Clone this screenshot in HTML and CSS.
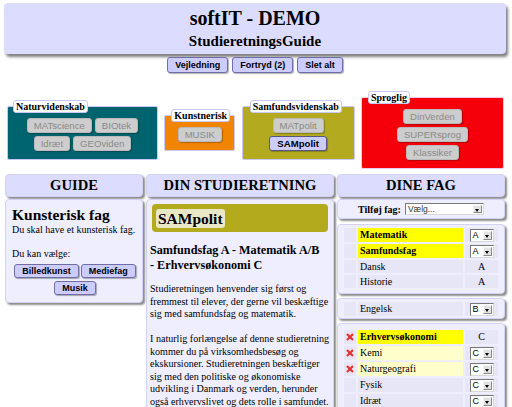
FILE: index.html
```html
<!DOCTYPE html>
<html lang="da">
<head>
<meta charset="utf-8">
<title>softIT - DEMO</title>
<link rel="stylesheet" href="styles.css">
</head>
<body>
<div class="page">
  <header class="top">
    <h1>softIT - DEMO</h1>
    <div class="sub">StudieretningsGuide</div>
  </header>
  <nav class="actions">
    <span class="btn">Vejledning</span>
    <span class="btn">Fortryd (2)</span>
    <span class="btn">Slet alt</span>
  </nav>

  <section class="cats">
    <div class="cat cat-nat">
      <div class="cat-label">Naturvidenskab</div>
      <div class="brow"><span class="cbtn">MATscience</span><span class="cbtn">BIOtek</span></div>
      <div class="brow"><span class="cbtn">Idræt</span><span class="cbtn">GEOviden</span></div>
    </div>
    <div class="cat cat-kun">
      <div class="cat-label">Kunstnerisk</div>
      <div class="brow"><span class="cbtn">MUSIK</span></div>
    </div>
    <div class="cat cat-sam">
      <div class="cat-label">Samfundsvidenskab</div>
      <div class="brow"><span class="cbtn">MATpolit</span></div>
      <div class="brow"><span class="cbtn on">SAMpolit</span></div>
    </div>
    <div class="cat cat-spr">
      <div class="cat-label">Sproglig</div>
      <div class="brow"><span class="cbtn">DinVerden</span></div>
      <div class="brow"><span class="cbtn">SUPERsprog</span></div>
      <div class="brow"><span class="cbtn">Klassiker</span></div>
    </div>
  </section>

  <main class="cols">
    <div class="col">
      <div class="col-head">GUIDE</div>
      <div class="panel guide">
        <h3>Kunsterisk fag</h3>
        <div class="gtext">Du skal have et kunsterisk fag.<br><br>Du kan vælge:</div>
        <div class="gbtns">
          <div class="grow"><span class="btn">Billedkunst</span><span class="btn">Mediefag</span></div>
          <div class="grow"><span class="btn">Musik</span></div>
        </div>
      </div>
    </div>

    <div class="col">
      <div class="col-head">DIN STUDIERETNING</div>
      <div class="panel studie">
        <div class="sr-box"><span class="sr-name">SAMpolit</span></div>
        <h4>Samfundsfag A - Matematik A/B <span class="nw">- Erhvervsøkonomi C</span></h4>
        <p>Studieretningen henvender sig først og fremmest til elever, der gerne vil beskæftige sig med samfundsfag og matematik.</p>
        <p>I naturlig forlængelse af denne studieretning kommer du på virksomhedsbesøg og ekskursioner. Studieretningen beskæftiger sig med den politiske og økonomiske udvikling i Danmark og verden, herunder også erhvervslivet og dets rolle i samfundet.</p>
      </div>
    </div>

    <div class="col">
      <div class="col-head">DINE FAG</div>
      <div class="panel add">
        <b>Tilføj fag:</b>
        <span class="sel wide"><span class="sel-t">Vælg...</span><span class="arr"></span></span>
      </div>
      <div class="panel fag p1">
        <table>
          <tr class="hs"><td class="ic"></td><td class="nm hl">Matematik</td><td class="gr"><span class="sel"><span class="sel-t">A</span><span class="arr"></span></span></td></tr>
          <tr class="hs"><td class="ic"></td><td class="nm hl">Samfundsfag</td><td class="gr"><span class="sel"><span class="sel-t">A</span><span class="arr"></span></span></td></tr>
          <tr class="ht"><td class="ic"></td><td class="nm">Dansk</td><td class="gr">A</td></tr>
          <tr class="ht"><td class="ic"></td><td class="nm">Historie</td><td class="gr">A</td></tr>
        </table>
      </div>
      <div class="panel fag p2">
        <table>
          <tr class="hs"><td class="ic"></td><td class="nm">Engelsk</td><td class="gr"><span class="sel"><span class="sel-t">B</span><span class="arr"></span></span></td></tr>
        </table>
      </div>
      <div class="panel fag p3">
        <table>
          <tr class="hs"><td class="ic"><svg class="x" viewBox="0 0 8 8" width="8" height="8"><path d="M1 1L7 7M7 1L1 7"/></svg></td><td class="nm hl">Erhvervsøkonomi</td><td class="gr">C</td></tr>
          <tr class="hs"><td class="ic"><svg class="x" viewBox="0 0 8 8" width="8" height="8"><path d="M1 1L7 7M7 1L1 7"/></svg></td><td class="nm lt">Kemi</td><td class="gr"><span class="sel"><span class="sel-t">C</span><span class="arr"></span></span></td></tr>
          <tr class="hs"><td class="ic"><svg class="x" viewBox="0 0 8 8" width="8" height="8"><path d="M1 1L7 7M7 1L1 7"/></svg></td><td class="nm lt">Naturgeografi</td><td class="gr"><span class="sel"><span class="sel-t">C</span><span class="arr"></span></span></td></tr>
          <tr class="hs"><td class="ic"></td><td class="nm">Fysik</td><td class="gr"><span class="sel"><span class="sel-t">C</span><span class="arr"></span></span></td></tr>
          <tr class="hs"><td class="ic"></td><td class="nm">Idræt</td><td class="gr"><span class="sel"><span class="sel-t">C</span><span class="arr"></span></span></td></tr>
        </table>
      </div>
    </div>
  </main>
</div>
</body>
</html>
```

FILE: styles.css
```css
* { box-sizing: border-box; }
html, body { margin: 0; padding: 0; background: #fff; overflow: hidden; }
body { font-family: "Liberation Serif", "Times New Roman", serif; color: #000; }

.page { padding-top: 3px; }

.top {
  margin: 0 6px 0 4px;
  background: #dcdcff;
  border-radius: 4px;
  box-shadow: 2px 3px 3px rgba(0, 0, 0, 0.5);
  text-align: center;
  padding: 4px 0 4px;
}
.top h1 { margin: 0; font-size: 20px; line-height: 23px; font-weight: bold; }
.top .sub { margin: 2px 0 0; font-size: 15px; line-height: 18px; font-weight: bold; }

.actions { display: flex; justify-content: center; gap: 4px; margin: 3px 2px 0 0; }

.btn {
  display: inline-block;
  font: bold 9px/12px "Liberation Sans", Arial, sans-serif;
  background: #ccccff;
  border: 1px solid #6f6fa8;
  border-radius: 3px;
  padding: 1px 7px;
  color: #000;
  box-shadow: 1px 1px 1px rgba(0, 0, 0, 0.3);
}

/* categories */
.cats {
  display: flex;
  justify-content: space-between;
  align-items: center;
  margin: 24px 8px 0 7px;
}
.cat {
  display: flex;
  flex-direction: column;
  align-items: center;
  border: 1px solid #c8c8f8;
  border-radius: 2px;
  padding: 0 6px 8px;
}
.cat-nat { width: 151px; background: #00646f; }
.cat-kun { width: 71px; background: #f18400; }
.cat-sam { width: 113px; background: #b3aa1f; }
.cat-spr { width: 143px; background: #f5000a; border-color: #f0c8f0; }
.cat-label {
  align-self: flex-start;
  margin: -7px 0 5px 0;
  background: #fff;
  border: 1px solid #c8c8f8;
  border-radius: 3px;
  padding: 0 2px;
  font: bold 10px/11px "Liberation Serif", serif;
}
.cat-nat .cat-label { margin-left: -1px; }
.cat-sam .cat-label { margin-left: 1px; }
.brow { display: flex; justify-content: center; gap: 3px; }
.brow + .brow { margin-top: 3px; }
.cbtn {
  font: 9.6px/11px "Liberation Sans", Arial, sans-serif;
  color: #8a8a8a;
  background: #cdcdcd;
  border: 1px solid #b9b9b9;
  border-radius: 3px;
  padding: 1px 6px;
  box-shadow: 1px 1px 1px rgba(0, 0, 0, 0.25);
}
.cbtn.on {
  background: #ccccff;
  border-color: #555588;
  color: #000;
  font-weight: bold;
  padding: 1px 7px;
}

/* columns */
.cols {
  display: grid;
  grid-template-columns: 138px 188px 168px;
  column-gap: 3px;
  margin: 5px 0 0 5px;
  align-items: start;
}
.col-head {
  height: 23px;
  background: #dcdcff;
  border: 1px solid #d2d2f6;
  border-radius: 4px;
  box-shadow: 2px 2px 2px rgba(0, 0, 0, 0.45);
  text-align: center;
  font: bold 14.6px/21px "Liberation Serif", serif;
}
.panel {
  margin-top: 2px;
  background: #eeeefe;
  border: 1px solid #d2d2f6;
  border-radius: 4px;
  box-shadow: 2px 2px 2px rgba(0, 0, 0, 0.45);
}

/* guide */
.guide { padding: 6px 4px 7px 6px; }
.guide h3 { margin: 0; font-size: 15.5px; line-height: 18px; font-weight: bold; }
.gtext { font-size: 10px; line-height: 12px; }
.gbtns { margin-top: 4px; }
.grow { display: flex; justify-content: center; gap: 2px; }
.grow + .grow { margin-top: 3px; }
.guide .btn { line-height: 12px; padding: 0 7px; }

/* studieretning */
.studie { padding: 0 3px; min-height: 320px; }
.sr-box {
  margin: 4px 2px 0;
  background: #b4aa1e;
  border-radius: 4px;
  padding: 5px 4px 4px;
}
.sr-name {
  display: inline-block;
  background: #e9e8c6;
  border-radius: 3px;
  padding: 0 2px;
  font: bold 15.5px/19px "Liberation Serif", serif;
}
.studie h4 { margin: 11px 0 0; font-size: 12.2px; line-height: 15px; font-weight: bold; }
.nw { white-space: nowrap; }
.studie p { margin: 10px 0 12.5px; font-size: 10.1px; line-height: 12.5px; }

/* dine fag */
.add {
  display: flex;
  justify-content: center;
  align-items: center;
  gap: 4px;
  padding: 3px 0;
  height: 20px;
  font-size: 10px;
}
.panel.add { margin-top: 2px; }
.p1 { margin-top: 5px; padding: 1px 4px 3px; }
.p2 { margin-top: 4px; padding: 1px 4px 0; }
.p3 { margin-top: 4px; padding: 4px 4px 20px; }

.sel {
  display: inline-flex;
  align-items: stretch;
  height: 13px;
  width: 24px;
  background: #fff;
  border: 1px solid #7a7a7a;
  border-right-color: #d8d8d8;
  border-bottom-color: #d8d8d8;
  font: 9px/11px "Liberation Sans", Arial, sans-serif;
  text-align: left;
  vertical-align: middle;
}
.sel.wide { width: 79px; height: 12px; font-size: 8.5px; line-height: 10px; color: #333; }
.sel-t { flex: 1; padding-left: 2px; }
.arr {
  position: relative;
  width: 9px;
  margin: 1px;
  background: #e2e2e2;
  border: 1px solid #8a8a8a;
  border-top-color: #f4f4f4;
  border-left-color: #f4f4f4;
}
.arr::after {
  content: "";
  position: absolute;
  left: 1px;
  top: 3px;
  border-left: 2.5px solid transparent;
  border-right: 2.5px solid transparent;
  border-top: 3px solid #000;
}

.fag table { width: 100%; border-spacing: 2px; }
.fag td { padding: 0; background: #e6e6f6; font-size: 10px; line-height: 12px; }
.fag tr.hs td { height: 14px; }
.fag tr.ht td { height: 13px; }
.fag td.ic { width: 12px; text-align: center; }
.fag td.nm { padding-left: 2px; }
.fag td.gr { width: 33px; text-align: center; }
.fag td.hl { background: #ffff00; font-weight: bold; }
.fag td.lt { background: #ffffcc; }
.x { display: block; margin: 0 auto; }
.x path { stroke: #e3342f; stroke-width: 2.2; fill: none; }
```
